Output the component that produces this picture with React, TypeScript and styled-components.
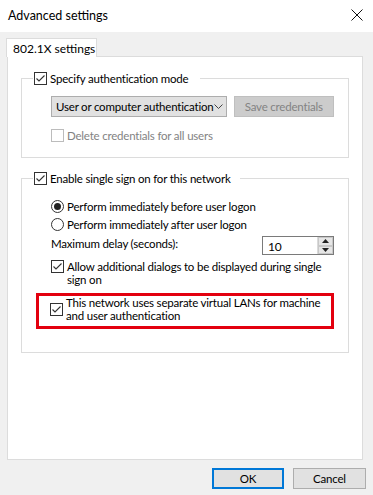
import React, { ReactElement, ReactNode } from 'react';
import styled, { createGlobalStyle } from 'styled-components';

const colors = {
  FACE: '#f0f0f0',
  WHITE: '#ffffff',
  TEXT: '#000000',
  DISABLED: '#838383',
  LINE: '#dcdcdc',
  BUTTON: '#e1e1e1',
  BUTTON_BORDER: '#adadad',
  ACCENT: '#0078d7',
  RED: '#e3000f',
};

const GlobalStyle = createGlobalStyle`
  body {
    margin: 0;
    background: ${colors.FACE};
    font-family: Lato, 'Liberation Sans', sans-serif;
    font-size: 11.5px;
    letter-spacing: -0.2px;
    color: ${colors.TEXT};
  }
`;

const Window = styled.div`
  width: 373px;
  height: 495px;
  display: flex;
  flex-direction: column;
  background: ${colors.FACE};
  overflow: hidden;
`;

const TitleBar = styled.div`
  height: 32px;
  flex: none;
  background: ${colors.WHITE};
  display: flex;
  align-items: center;
  justify-content: space-between;
  padding: 0 10px 0 8px;
`;

const Title = styled.span`
  font-size: 12.5px;
  letter-spacing: 0;
  margin-top: -2px;
`;

const CloseIcon = styled.svg`
  width: 12px;
  height: 12px;
  margin-top: -2px;
`;

const Content = styled.div`
  flex: 1;
  display: flex;
  flex-direction: column;
  padding: 6px 10px 0 6px;
`;

const TabStrip = styled.div`
  display: flex;
  height: 19px;
  margin-bottom: -1px;
  position: relative;
  z-index: 1;
`;

const Tab = styled.div`
  width: 91px;
  background: ${colors.WHITE};
  border: 1px solid ${colors.LINE};
  border-bottom: none;
  padding: 2px 0 0 6px;
  box-sizing: border-box;
  font-size: 12px;
  letter-spacing: 0;
`;

const Panel = styled.div`
  flex: 1;
  margin-left: 1px;
  background: ${colors.WHITE};
  border: 1px solid ${colors.LINE};
  padding: 14px 13px 0 13px;
  display: flex;
  flex-direction: column;
`;

const GroupBox = styled.fieldset<{ $gap?: number }>`
  margin: ${(p) => p.$gap ?? 0}px 0 0 0;
  padding: 0;
  border: 1px solid ${colors.LINE};
  min-width: 0;
`;

const GroupBody = styled.div<{ $bottom: number }>`
  display: flex;
  flex-direction: column;
  padding: 0 14px ${(p) => p.$bottom}px 29px;
`;

const Legend = styled.legend<{ $padRight: number }>`
  margin-left: 11px;
  padding: 0 ${(p) => p.$padRight}px 0 1px;
  display: flex;
  align-items: center;
  height: 14px;
`;

const Row = styled.div<{ $mt: number; $align?: string }>`
  display: flex;
  align-items: ${(p) => p.$align ?? 'center'};
  margin-top: ${(p) => p.$mt}px;
`;

const Label = styled.span<{ $disabled?: boolean }>`
  color: ${(p) => (p.$disabled ? colors.DISABLED : colors.TEXT)};
  line-height: 13px;
  white-space: nowrap;
`;

const Box = styled.span<{ $disabled?: boolean }>`
  width: 13px;
  height: 13px;
  flex: none;
  box-sizing: border-box;
  border: 1px solid ${(p) => (p.$disabled ? '#bcbcbc' : '#333333')};
  background: ${colors.WHITE};
  margin-right: 3px;
  display: flex;
  align-items: center;
  justify-content: center;
`;

const RadioCircle = styled.span`
  width: 13px;
  height: 13px;
  flex: none;
  box-sizing: border-box;
  border: 1px solid #333333;
  border-radius: 50%;
  margin-right: 3px;
  display: flex;
  align-items: center;
  justify-content: center;
`;

const RadioDot = styled.span`
  width: 7px;
  height: 7px;
  border-radius: 50%;
  background: #222222;
`;

const Dropdown = styled.div`
  width: 180px;
  height: 21px;
  box-sizing: border-box;
  background: ${colors.BUTTON};
  border: 1px solid ${colors.BUTTON_BORDER};
  display: flex;
  align-items: center;
  justify-content: space-between;
  padding: 0 3px 0 4px;
  white-space: nowrap;
`;

const Button = styled.div<{ $width: number; $disabled?: boolean; $default?: boolean }>`
  width: ${(p) => p.$width}px;
  height: 21px;
  box-sizing: border-box;
  background: ${(p) => (p.$disabled ? '#cccccc' : colors.BUTTON)};
  border: ${(p) =>
    p.$default
      ? `2px solid ${colors.ACCENT}`
      : `1px solid ${p.$disabled ? '#bfbfbf' : colors.BUTTON_BORDER}`};
  color: ${(p) => (p.$disabled ? colors.DISABLED : colors.TEXT)};
  display: flex;
  align-items: center;
  justify-content: center;
  white-space: nowrap;
`;

const SpinBox = styled.div`
  width: 72px;
  height: 19px;
  box-sizing: border-box;
  border: 1px solid #7a7a7a;
  display: flex;
  margin-left: auto;
`;

const SpinValue = styled.span`
  flex: 1;
  padding: 2px 0 0 5px;
  font-size: 12px;
`;

const SpinButtons = styled.div`
  width: 15px;
  display: flex;
  flex-direction: column;
  border-left: 1px solid #dadada;
`;

const SpinArrow = styled.div`
  flex: 1;
  background: #e6e6e6;
  border: 1px solid #c8c8c8;
  display: flex;
  align-items: center;
  justify-content: center;
`;

const Highlight = styled.div`
  margin: 7px 0 0 -15px;
  border: 3px solid ${colors.RED};
  padding: 0 0 4px 11px;
  display: flex;
  align-items: center;
`;

const Footer = styled.div`
  height: 35px;
  flex: none;
  display: flex;
  justify-content: flex-end;
  align-items: flex-start;
  gap: 9px;
  padding: 8px 7px 0 0;
  box-sizing: border-box;
`;

const CheckBox = ({ checked, disabled }: { checked?: boolean; disabled?: boolean }): ReactElement => (
  <Box $disabled={disabled}>
    {checked && (
      <svg width="11" height="11" viewBox="0 0 11 11">
        <path d="M1.5 5.5 L4 8 L9.5 2.5" fill="none" stroke="#333" strokeWidth="1.1" />
      </svg>
    )}
  </Box>
);

const Radio = ({ selected }: { selected?: boolean }): ReactElement => (
  <RadioCircle>{selected && <RadioDot />}</RadioCircle>
);

const Option = ({ children, checked, disabled }: { children: ReactNode; checked?: boolean; disabled?: boolean }) => (
  <>
    <CheckBox checked={checked} disabled={disabled} />
    <Label $disabled={disabled}>{children}</Label>
  </>
);

const App = (): ReactElement => {
  return (
    <Window>
      <GlobalStyle />
      <TitleBar>
        <Title>Advanced settings</Title>
        <CloseIcon viewBox="0 0 12 12">
          <path d="M0.5 0.5 L11.5 11.5 M11.5 0.5 L0.5 11.5" stroke="#111" strokeWidth="1" />
        </CloseIcon>
      </TitleBar>
      <Content>
        <TabStrip>
          <Tab>802.1X settings</Tab>
        </TabStrip>
        <Panel>
          <GroupBox>
            <Legend $padRight={12}>
              <Option checked>Specify authentication mode</Option>
            </Legend>
            <GroupBody $bottom={15}>
              <Row $mt={11}>
                <Dropdown>
                  <span>User or computer authentication</span>
                  <svg width="9" height="6" viewBox="0 0 9 6">
                    <path d="M0.5 0.5 L4.5 4.5 L8.5 0.5" fill="none" stroke="#444" strokeWidth="1" />
                  </svg>
                </Dropdown>
                <Button $width={108} $disabled style={{ marginLeft: 7 }}>
                  Save credentials
                </Button>
              </Row>
              <Row $mt={12}>
                <Option disabled>Delete credentials for all users</Option>
              </Row>
            </GroupBody>
          </GroupBox>

          <GroupBox $gap={13}>
            <Legend $padRight={9}>
              <Option checked>Enable single sign on for this network</Option>
            </Legend>
            <GroupBody $bottom={23}>
              <Row $mt={15}>
                <Radio selected />
                <Label>Perform immediately before user logon</Label>
              </Row>
              <Row $mt={5}>
                <Radio />
                <Label>Perform immediately after user logon</Label>
              </Row>
              <Row $mt={5} $align="flex-start">
                <Label style={{ lineHeight: '15px' }}>Maximum delay (seconds):</Label>
                <SpinBox>
                  <SpinValue>10</SpinValue>
                  <SpinButtons>
                    <SpinArrow>
                      <svg width="7" height="4" viewBox="0 0 7 4">
                        <path d="M0 4 L3.5 0 L7 4 Z" fill="#222" />
                      </svg>
                    </SpinArrow>
                    <SpinArrow>
                      <svg width="7" height="4" viewBox="0 0 7 4">
                        <path d="M0 0 L3.5 4 L7 0 Z" fill="#222" />
                      </svg>
                    </SpinArrow>
                  </SpinButtons>
                </SpinBox>
              </Row>
              <Row $mt={5} $align="flex-start">
                <Option checked>
                  Allow additional dialogs to be displayed during single
                  <br />
                  sign on
                </Option>
              </Row>
              <Highlight>
                <Option checked>
                  This network uses separate virtual LANs for machine
                  <br />
                  and user authentication
                </Option>
              </Highlight>
            </GroupBody>
          </GroupBox>
        </Panel>
      </Content>
      <Footer>
        <Button $width={72} $default>
          OK
        </Button>
        <Button $width={73}>Cancel</Button>
      </Footer>
    </Window>
  );
};

export default App;
